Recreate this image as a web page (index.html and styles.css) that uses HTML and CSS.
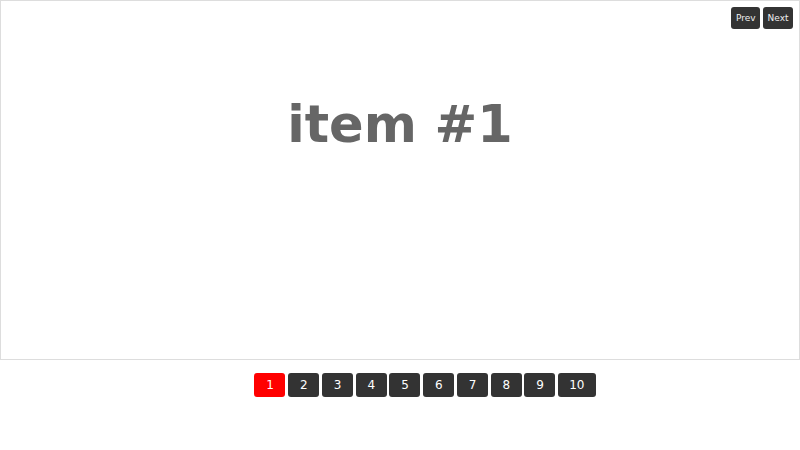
FILE: index.html
```
<!DOCTYPE html>
<html>
<head>
<meta charset="utf-8">
<link rel="stylesheet" href="styles.css">
</head>
<body>
<div class="stage">
  <div class="toolbar">
    <button class="nav">Prev</button>
    <button class="nav">Next</button>
  </div>
  <div class="title">item #1</div>
</div>
<div class="pager">
  <button class="page active">1</button>
  <button class="page">2</button>
  <button class="page">3</button>
  <button class="page">4</button>
  <button class="page">5</button>
  <button class="page">6</button>
  <button class="page">7</button>
  <button class="page">8</button>
  <button class="page">9</button>
  <button class="page">10</button>
</div>
</body>
</html>
```
FILE: styles.css
```
html, body {
  margin: 0;
  padding: 0;
  background: #fff;
  font-family: "DejaVu Sans", sans-serif;
}
.stage {
  box-sizing: border-box;
  width: 800px;
  height: 360px;
  border: 1px solid #dddddd;
  display: flex;
  flex-direction: column;
}
.toolbar {
  display: flex;
  justify-content: flex-end;
  gap: 3px;
  padding: 6px 6px 0 0;
}
.nav {
  height: 22px;
  padding: 0 4.5px;
  border: none;
  border-radius: 3px;
  background: #333;
  color: #eee;
  font-family: "DejaVu Sans", sans-serif;
  font-weight: normal;
  font-size: 9px;
  line-height: 22px;
}
.title {
  margin-top: 66px;
  text-align: center;
  font-size: 51px;
  font-weight: bold;
  color: #666;
  line-height: normal;
}
.pager {
  display: flex;
  justify-content: center;
  gap: 2.75px;
  padding: 13px 0 0 50px;
}
.page {
  min-width: 31px;
  height: 24px;
  padding: 0 11px;
  border: none;
  border-radius: 3px;
  background: #333;
  color: #fff;
  font-family: "DejaVu Sans", sans-serif;
  font-size: 12px;
  line-height: 24px;
}
.page.active {
  background: #ff0000;
}
```
